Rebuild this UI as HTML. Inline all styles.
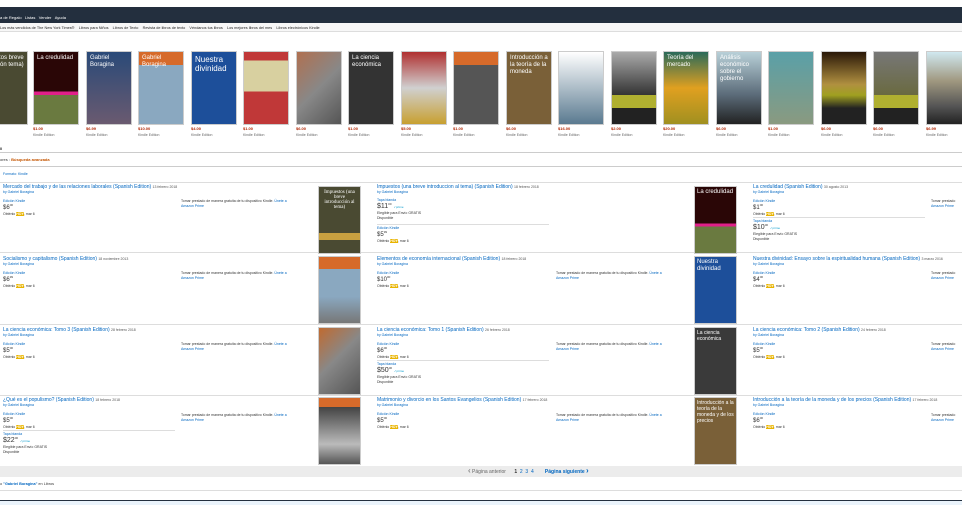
<!DOCTYPE html><html><head><meta charset="utf-8"><style>
*{margin:0;padding:0;box-sizing:border-box}
body{width:962px;height:505px;overflow:hidden;background:#fff;font-family:"Liberation Sans",sans-serif;position:relative;color:#333;font-size:4px}
.a{position:absolute;white-space:nowrap}
.cv{position:absolute;top:51px;width:46px;height:74px;border:1px solid #ccc;overflow:hidden;color:#fff;font-size:6px;padding:3px;line-height:7px}
.pr{position:absolute;top:126px;font-size:4px;color:#b12704;font-weight:bold}
.ke{position:absolute;top:133px;font-size:3.5px;color:#666}
.t{font-size:5px;color:#0066c0}
.d{font-size:3.5px;color:#555}
.s{font-size:3.5px;color:#0066c0}
.g{font-size:3.5px;color:#333}
.g>div{height:5px;line-height:5px;white-space:nowrap}
.g>div.P{height:8px;line-height:8px;font-size:6px}
.g>div.P.big{font-size:7px}
.P i{font-style:normal;font-size:3px;position:relative;top:-3px}
.P em{font-style:normal;font-size:3px;color:#0099cc}
.hoy{color:#fff;background:#e9b400;font-weight:bold}
.hr{position:absolute;height:2px;background:#ddd;left:0;width:962px}
.im{position:absolute;width:43px;height:68px;border:1px solid #ccc}
.tp{position:absolute;font-size:3.5px;color:#333;line-height:5px;white-space:nowrap}
.tp span{color:#0066c0}
.ti{position:absolute;white-space:nowrap;font-size:5px;line-height:6px}
.ti .s{display:block;line-height:5px}
</style></head><body>
<div class="a" style="left:0;top:7px;width:962px;height:16px;background:#232f3e"></div>
<div class="a" style="left:0;top:15px;font-size:4px;color:#fff">a de Regalo&nbsp;&nbsp;&nbsp;Listas&nbsp;&nbsp;&nbsp;Vender&nbsp;&nbsp;&nbsp;Ayuda</div>
<div class="a" style="left:0;top:23px;width:962px;height:9px;background:#f7f7f7;border-bottom:1px solid #ddd"></div>
<div class="a" style="left:0;top:26px;font-size:3.8px;color:#222">Los más vendidos de The New York Times®&nbsp;&nbsp;&nbsp;&nbsp;Libros para Niños&nbsp;&nbsp;&nbsp;&nbsp;Libros de Texto&nbsp;&nbsp;&nbsp;&nbsp;Revista de libros de texto&nbsp;&nbsp;&nbsp;&nbsp;Véndanos tus libros&nbsp;&nbsp;&nbsp;&nbsp;Los mejores libros del mes&nbsp;&nbsp;&nbsp;&nbsp;Libros electrónicos Kindle</div>

<div class="cv" style="left:-18px;background:#4a4a32">puestos breve ducción tema)</div>
<div class="cv" style="left:33px;background:linear-gradient(#2a0606 55%,#e0208a 55% 60%,#6a7a40 60%)">La credulidad</div>
<div class="cv" style="left:86px;background:linear-gradient(#2a4a78,#6a5a70)">Gabriel Boragina</div>
<div class="cv" style="left:138px;background:linear-gradient(#d66a2a 18%,#8aa8c0 18%)">Gabriel Boragina</div>
<div class="cv" style="left:191px;background:#1d4f9a;font-size:8px;line-height:9px">Nuestra divinidad</div>
<div class="cv" style="left:243px;background:linear-gradient(#c03838 12%,#d8d0a0 12% 55%,#c03838 55%)"></div>
<div class="cv" style="left:296px;background:linear-gradient(135deg,#b07050,#888 50%,#555)"></div>
<div class="cv" style="left:348px;background:#333">La ciencia económica</div>
<div class="cv" style="left:401px;background:linear-gradient(#b03030,#d0d0d0 50%,#c8a030)"></div>
<div class="cv" style="left:453px;background:linear-gradient(#d66a2a 18%,#555 18%)"></div>
<div class="cv" style="left:506px;background:#7a6038">Introducción a la teoría de la moneda</div>
<div class="cv" style="left:558px;background:linear-gradient(#fff,#5a7a90)"></div>
<div class="cv" style="left:611px;background:linear-gradient(#aaa,#333 60%,#b0b030 60% 78%,#222 78%)"></div>
<div class="cv" style="left:663px;background:linear-gradient(#2a6a5a,#e0a020 50%,#a09020)">Teoría del mercado</div>
<div class="cv" style="left:716px;background:linear-gradient(#b8d0d8,#5a6a78 60%,#222)">Análisis económico sobre el gobierno</div>
<div class="cv" style="left:768px;background:linear-gradient(#5aa0a8,#8a9a80)"></div>
<div class="cv" style="left:821px;background:linear-gradient(#2a1808,#b09040 45%,#a0a020 60%,#222 78%)"></div>
<div class="cv" style="left:873px;background:linear-gradient(#777,#6a6a40 60%,#b0b030 60% 78%,#222 78%)"></div>
<div class="cv" style="left:926px;background:linear-gradient(#d0e8f0,#a09880 40%,#555 75%,#222)"></div>

<div class="pr" style="left:33px">$1.00</div><div class="pr" style="left:86px">$6.99</div><div class="pr" style="left:138px">$10.00</div><div class="pr" style="left:191px">$4.00</div><div class="pr" style="left:243px">$1.00</div><div class="pr" style="left:296px">$6.00</div><div class="pr" style="left:348px">$1.00</div><div class="pr" style="left:401px">$5.00</div><div class="pr" style="left:453px">$1.00</div><div class="pr" style="left:506px">$6.00</div><div class="pr" style="left:558px">$16.00</div><div class="pr" style="left:611px">$2.00</div><div class="pr" style="left:663px">$20.00</div><div class="pr" style="left:716px">$6.00</div><div class="pr" style="left:768px">$1.00</div><div class="pr" style="left:821px">$6.00</div><div class="pr" style="left:873px">$6.00</div><div class="pr" style="left:926px">$6.99</div>
<div class="ke" style="left:33px">Kindle Edition</div><div class="ke" style="left:86px">Kindle Edition</div><div class="ke" style="left:138px">Kindle Edition</div><div class="ke" style="left:191px">Kindle Edition</div><div class="ke" style="left:243px">Kindle Edition</div><div class="ke" style="left:296px">Kindle Edition</div><div class="ke" style="left:348px">Kindle Edition</div><div class="ke" style="left:401px">Kindle Edition</div><div class="ke" style="left:453px">Kindle Edition</div><div class="ke" style="left:506px">Kindle Edition</div><div class="ke" style="left:558px">Kindle Edition</div><div class="ke" style="left:611px">Kindle Edition</div><div class="ke" style="left:663px">Kindle Edition</div><div class="ke" style="left:716px">Kindle Edition</div><div class="ke" style="left:768px">Kindle Edition</div><div class="ke" style="left:821px">Kindle Edition</div><div class="ke" style="left:873px">Kindle Edition</div><div class="ke" style="left:926px">Kindle Edition</div>

<div class="a" style="left:0;top:146px;font-size:4px;font-weight:bold">ll</div>
<div class="hr" style="top:152px;height:1px;background:#ccc"></div>
<div class="a" style="left:0;top:157px;font-size:4px">ores : <span style="color:#c45500;font-weight:bold">Búsqueda avanzada</span></div>
<div class="hr" style="top:166px;height:1px;background:#ccc"></div>
<div class="a s" style="left:3px;top:172px">Formato: Kindle</div>

<div class="hr" style="top:182px;height:1px"></div>
<div class="hr" style="top:252px;height:1px"></div>
<div class="hr" style="top:324px;height:1px"></div>
<div class="hr" style="top:395px;height:1px"></div>

<!-- left col -->
<div class="ti" style="left:3px;top:184px"><span class="t">Mercado del trabajo y de las relaciones laborales (Spanish Edition)</span> <span class="d">13 febrero 2018</span><span class="s">by Gabriel Boragina</span></div>
<div class="a g" style="left:3px;top:199px"><div class="s">Edición Kindle</div><div class="P">$6<i>00</i></div><div>Obténlo <span class="hoy">HOY</span>, mar 6</div></div>
<div class="tp" style="left:181px;top:199px">Tomar prestado de manera gratuita de tu dispositivo Kindle. <span>Únete a</span><br><span>Amazon Prime</span></div>

<div class="ti" style="left:3px;top:256px"><span class="t">Socialismo y capitalismo (Spanish Edition)</span> <span class="d">18 noviembre 2013</span><span class="s">by Gabriel Boragina</span></div>
<div class="a g" style="left:3px;top:271px"><div class="s">Edición Kindle</div><div class="P">$6<i>99</i></div><div>Obténlo <span class="hoy">HOY</span>, mar 6</div></div>
<div class="tp" style="left:181px;top:271px">Tomar prestado de manera gratuita de tu dispositivo Kindle. <span>Únete a</span><br><span>Amazon Prime</span></div>

<div class="ti" style="left:3px;top:327px"><span class="t">La ciencia económica: Tomo 3 (Spanish Edition)</span> <span class="d">28 febrero 2018</span><span class="s">by Gabriel Boragina</span></div>
<div class="a g" style="left:3px;top:342px"><div class="s">Edición Kindle</div><div class="P">$5<i>00</i></div><div>Obténlo <span class="hoy">HOY</span>, mar 6</div></div>
<div class="tp" style="left:181px;top:342px">Tomar prestado de manera gratuita de tu dispositivo Kindle. <span>Únete a</span><br><span>Amazon Prime</span></div>

<div class="ti" style="left:3px;top:397px"><span class="t">¿Qué es el populismo? (Spanish Edition)</span> <span class="d">18 febrero 2018</span><span class="s">by Gabriel Boragina</span></div>
<div class="a g" style="left:3px;top:412px"><div class="s">Edición Kindle</div><div class="P">$5<i>00</i></div><div>Obténlo <span class="hoy">HOY</span>, mar 6</div></div>
<div class="a" style="left:3px;top:430px;width:172px;height:1px;background:#ddd"></div>
<div class="a g" style="left:3px;top:432px"><div class="s">Tapa blanda</div><div class="P big">$22<i>00</i> <em>✓prime</em></div><div>Elegible para Envío GRATIS</div><div>Disponible</div></div>
<div class="tp" style="left:181px;top:413px">Tomar prestado de manera gratuita de tu dispositivo Kindle. <span>Únete a</span><br><span>Amazon Prime</span></div>

<!-- middle col -->
<div class="im" style="left:318px;top:186px;background:linear-gradient(#4a4a32 70%,#c8a040 70% 80%,#4a4a32 80%)"><div style="color:#fff;font-family:'Liberation Serif';font-size:5px;padding:3px;line-height:5px;text-align:center">Impuestos (una breve introducción al tema)</div></div>
<div class="im" style="left:318px;top:256px;background:linear-gradient(#d66a2a 18%,#8aa8c0 18% 60%,#777)"></div>
<div class="im" style="left:318px;top:327px;background:linear-gradient(135deg,#c06a30,#888 45%,#555)"></div>
<div class="im" style="left:318px;top:397px;background:linear-gradient(#d66a2a 14%,#444 14%,#bbb 70%,#555)"></div>

<div class="ti" style="left:377px;top:184px"><span class="t">Impuestos (una breve introduccion al tema) (Spanish Edition)</span> <span class="d">18 febrero 2018</span><span class="s">by Gabriel Boragina</span></div>
<div class="a g" style="left:377px;top:198px"><div class="s">Tapa blanda</div><div class="P big">$11<i>00</i> <em>✓prime</em></div><div>Elegible para Envío GRATIS</div><div>Disponible</div></div>
<div class="a" style="left:377px;top:224px;width:172px;height:1px;background:#ddd"></div>
<div class="a g" style="left:377px;top:226px"><div class="s">Edición Kindle</div><div class="P">$5<i>99</i></div><div>Obténlo <span class="hoy">HOY</span>, mar 6</div></div>

<div class="ti" style="left:377px;top:256px"><span class="t">Elementos de economía internacional (Spanish Edition)</span> <span class="d">18 febrero 2018</span><span class="s">by Gabriel Boragina</span></div>
<div class="a g" style="left:377px;top:271px"><div class="s">Edición Kindle</div><div class="P">$10<i>00</i></div><div>Obténlo <span class="hoy">HOY</span>, mar 6</div></div>
<div class="tp" style="left:556px;top:271px">Tomar prestado de manera gratuita de tu dispositivo Kindle. <span>Únete a</span><br><span>Amazon Prime</span></div>

<div class="ti" style="left:377px;top:327px"><span class="t">La ciencia económica: Tomo 1 (Spanish Edition)</span> <span class="d">26 febrero 2018</span><span class="s">by Gabriel Boragina</span></div>
<div class="a g" style="left:377px;top:342px"><div class="s">Edición Kindle</div><div class="P">$6<i>00</i></div><div>Obténlo <span class="hoy">HOY</span>, mar 6</div></div>
<div class="a" style="left:377px;top:360px;width:172px;height:1px;background:#ddd"></div>
<div class="a g" style="left:377px;top:362px"><div class="s">Tapa blanda</div><div class="P big">$50<i>00</i> <em>✓prime</em></div><div>Elegible para Envío GRATIS</div><div>Disponible</div></div>
<div class="tp" style="left:556px;top:342px">Tomar prestado de manera gratuita de tu dispositivo Kindle. <span>Únete a</span><br><span>Amazon Prime</span></div>

<div class="ti" style="left:377px;top:397px"><span class="t">Matrimonio y divorcio en los Santos Evangelios (Spanish Edition)</span> <span class="d">17 febrero 2018</span><span class="s">by Gabriel Boragina</span></div>
<div class="a g" style="left:377px;top:412px"><div class="s">Edición Kindle</div><div class="P">$5<i>00</i></div><div>Obténlo <span class="hoy">HOY</span>, mar 6</div></div>
<div class="tp" style="left:556px;top:413px">Tomar prestado de manera gratuita de tu dispositivo Kindle. <span>Únete a</span><br><span>Amazon Prime</span></div>

<!-- right col -->
<div class="im" style="left:694px;top:186px;background:linear-gradient(#2a0606 55%,#e0208a 55% 60%,#6a7a40 60%)"><div style="color:#fff;font-size:6px;padding:2px">La credulidad</div></div>
<div class="im" style="left:694px;top:256px;background:#1d4f9a"><div style="color:#fff;font-size:6px;padding:2px;line-height:7px">Nuestra divinidad</div></div>
<div class="im" style="left:694px;top:327px;background:#3a3a3a"><div style="color:#fff;font-size:5px;padding:2px">La ciencia económica</div></div>
<div class="im" style="left:694px;top:397px;background:#7a6038"><div style="color:#fff;font-size:5px;padding:2px;line-height:6px">Introducción a la teoría de la moneda y de los precios</div></div>

<div class="ti" style="left:753px;top:184px"><span class="t">La credulidad (Spanish Edition)</span> <span class="d">30 agosto 2013</span><span class="s">by Gabriel Boragina</span></div>
<div class="a g" style="left:753px;top:199px"><div class="s">Edición Kindle</div><div class="P">$1<i>00</i></div><div>Obténlo <span class="hoy">HOY</span>, mar 6</div></div>
<div class="a" style="left:753px;top:217px;width:172px;height:1px;background:#ddd"></div>
<div class="a g" style="left:753px;top:219px"><div class="s">Tapa blanda</div><div class="P big">$10<i>00</i> <em>✓prime</em></div><div>Elegible para Envío GRATIS</div><div>Disponible</div></div>
<div class="tp" style="left:931px;top:199px">Tomar prestado<br><span>Amazon Prime</span></div>

<div class="ti" style="left:753px;top:256px"><span class="t">Nuestra divinidad: Ensayo sobre la espiritualidad humana (Spanish Edition)</span> <span class="d">3 marzo 2016</span><span class="s">by Gabriel Boragina</span></div>
<div class="a g" style="left:753px;top:271px"><div class="s">Edición Kindle</div><div class="P">$4<i>00</i></div><div>Obténlo <span class="hoy">HOY</span>, mar 6</div></div>
<div class="tp" style="left:931px;top:271px">Tomar prestado<br><span>Amazon Prime</span></div>

<div class="ti" style="left:753px;top:327px"><span class="t">La ciencia económica: Tomo 2 (Spanish Edition)</span> <span class="d">24 febrero 2018</span><span class="s">by Gabriel Boragina</span></div>
<div class="a g" style="left:753px;top:342px"><div class="s">Edición Kindle</div><div class="P">$5<i>00</i></div><div>Obténlo <span class="hoy">HOY</span>, mar 6</div></div>
<div class="tp" style="left:931px;top:342px">Tomar prestado<br><span>Amazon Prime</span></div>

<div class="ti" style="left:753px;top:397px"><span class="t">Introducción a la teoría de la moneda y de los precios (Spanish Edition)</span> <span class="d">17 febrero 2018</span><span class="s">by Gabriel Boragina</span></div>
<div class="a g" style="left:753px;top:412px"><div class="s">Edición Kindle</div><div class="P">$6<i>00</i></div><div>Obténlo <span class="hoy">HOY</span>, mar 6</div></div>
<div class="tp" style="left:931px;top:413px">Tomar prestado<br><span>Amazon Prime</span></div>

<div class="a" style="left:0;top:466px;width:962px;height:11px;background:#ececec"></div>
<div class="a" style="left:468px;top:467px;font-size:5px;color:#666;line-height:8px"><span style="font-size:8px">‹</span> Página anterior&nbsp;&nbsp;&nbsp;&nbsp;&nbsp;&nbsp;<b style="color:#333">1</b>&nbsp;&nbsp;<span style="color:#0066c0">2&nbsp;&nbsp;3&nbsp;&nbsp;4</span>&nbsp;&nbsp;&nbsp;&nbsp;&nbsp;&nbsp;&nbsp;&nbsp;<b style="color:#0066c0">Página siguiente <span style="font-size:8px">›</span></b></div>
<div class="a" style="left:0;top:482px;font-size:3.8px;color:#333">o <b style="color:#0066c0">"Gabriel Boragina"</b> en Libros</div>
<div class="a" style="left:0;top:490px;width:962px;height:1px;background:#ddd"></div>
<div class="a" style="left:0;top:500px;width:962px;height:1px;background:#232f3e"></div>
<div class="a" style="left:0;top:501px;width:962px;height:4px;background:#eaf3fb"></div>
</body></html>
